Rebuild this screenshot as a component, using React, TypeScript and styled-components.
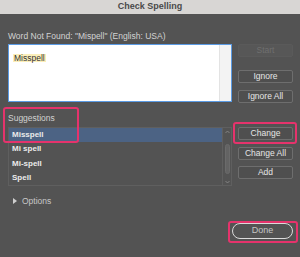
import React from "react";
import styled, { createGlobalStyle, css } from "styled-components";

const GlobalStyle = createGlobalStyle`
  html, body {
    margin: 0;
    padding: 0;
    background: #535353;
  }
  body {
    font-family: "Liberation Sans", Arial, sans-serif;
  }
`;

const PINK = "#e5336c";

// pink annotation frame drawn over a control
const marked = css`
  position: relative;
  &::after {
    content: "";
    position: absolute;
    border: 2px solid ${PINK};
    border-radius: 3px;
    pointer-events: none;
  }
`;

const Window = styled.div`
  width: 300px;
  height: 257px;
  background: #535353;
  display: flex;
  flex-direction: column;
  overflow: hidden;
`;

const TitleBar = styled.div`
  height: 14px;
  background: #d8d6d4;
  display: flex;
  justify-content: center;
  align-items: flex-start;
  padding-top: 1px;
  box-sizing: border-box;
  font-size: 9px;
  line-height: 11px;
  font-weight: bold;
  color: #4a4a4a;
`;

const Body = styled.div`
  display: flex;
  flex-direction: column;
  padding: 16px 0 0 8px;
`;

const FieldLabel = styled.div`
  font-size: 8.5px;
  line-height: 12px;
  color: #d2d2d2;
  white-space: nowrap;
`;

const Row = styled.div<{ $top: number }>`
  display: flex;
  gap: 6px;
  align-items: flex-start;
  margin-top: ${(p) => p.$top}px;
`;

const TextBox = styled.div`
  width: 224px;
  height: 58px;
  box-sizing: border-box;
  border: 1px solid #5b9be4;
  background: #ffffff;
  display: flex;
`;

const TextArea = styled.div`
  flex: 1;
  padding: 2px 4px;
`;

const BadWord = styled.span`
  display: inline-block;
  background: #fbeeb9;
  color: #333333;
  font-size: 8.5px;
  line-height: 8px;
  padding: 0 1px;
`;

const LightScroll = styled.div`
  width: 11px;
  background: #f3f3f3;
  border-left: 1px solid #e3e3e3;
`;

const ButtonStack = styled.div`
  width: 55px;
  display: flex;
  flex-direction: column;
`;

const Button = styled.div<{ $top?: number; $disabled?: boolean; $marked?: boolean }>`
  height: 13px;
  margin-top: ${(p) => p.$top ?? 0}px;
  box-sizing: border-box;
  border: 1px solid ${(p) => (p.$disabled ? "#5a5a5a" : "#6e6e6e")};
  border-radius: 2px;
  background: ${(p) => (p.$disabled ? "#575757" : "#4f4f4f")};
  color: ${(p) => (p.$disabled ? "#6f6f6f" : "#e6e6e6")};
  font-size: 8.5px;
  line-height: 11px;
  text-align: center;
  ${(p) =>
    p.$marked &&
    css`
      ${marked};
      &::after {
        inset: -6px -5px -5px -6px;
      }
    `}
`;

const SuggestionsBlock = styled.div`
  position: relative;
  margin-top: 9px;
`;

const Annotation = styled.div`
  position: absolute;
  left: -5px;
  top: -5px;
  width: 76px;
  height: 36px;
  box-sizing: border-box;
  border: 2px solid ${PINK};
  border-radius: 3px;
  pointer-events: none;
`;

const List = styled.div`
  width: 224px;
  height: 59px;
  box-sizing: border-box;
  border: 1px solid #5f5f5f;
  display: flex;
`;

const Rows = styled.div`
  flex: 1;
`;

const ListRow = styled.div<{ $selected?: boolean }>`
  height: 14.25px;
  line-height: 14.25px;
  padding-left: 3px;
  font-size: 8px;
  font-weight: bold;
  color: #ebebeb;
  background: ${(p) => (p.$selected ? "#4c6384" : "transparent")};
`;

const ScrollTrack = styled.div`
  width: 8px;
  border-left: 1px solid #5f5f5f;
  display: flex;
  flex-direction: column;
  align-items: center;
  padding: 2px 0 1px;
`;

const Thumb = styled.div`
  width: 5px;
  height: 30px;
  margin-top: 10px;
  box-sizing: border-box;
  border-radius: 3px;
  background: #636363;
  border: 1px solid #6b6b6b;
`;

const Spacer = styled.div`
  flex: 1;
`;

const OptionsRow = styled.div`
  display: flex;
  align-items: center;
  gap: 5px;
  margin-top: 9px;
  padding-left: 5px;
  height: 12px;
  font-size: 8.5px;
  color: #c8c8c8;
`;

const Footer = styled.div`
  display: flex;
  justify-content: flex-end;
  padding-right: 7px;
  margin-top: 16px;
`;

const PillButton = styled.div`
  ${marked};
  width: 61px;
  height: 16px;
  box-sizing: border-box;
  border: 1.5px solid #dadada;
  border-radius: 8px;
  background: #535353;
  color: #c4c4c4;
  font-size: 9px;
  line-height: 13px;
  text-align: center;
  &::after {
    inset: -3.5px -5.5px -4.5px -5.5px;
  }
`;

const Chevron = ({ up }: { up?: boolean }) => (
  <svg width="5" height="4" viewBox="0 0 5 4">
    <polyline
      points={up ? "0.5,3 2.5,1 4.5,3" : "0.5,1 2.5,3 4.5,1"}
      fill="none"
      stroke="#8f8f8f"
      strokeWidth="0.8"
    />
  </svg>
);

const suggestions = ["Misspell", "Mi spell", "Mi-spell", "Spell"];

const App = () => {
  return (
    <Window>
      <GlobalStyle />
      <TitleBar>Check Spelling</TitleBar>
      <Body>
        <FieldLabel>Word Not Found: "Mispell" (English: USA)</FieldLabel>
        <Row $top={2}>
          <TextBox>
            <TextArea>
              <BadWord>Misspell</BadWord>
            </TextArea>
            <LightScroll />
          </TextBox>
          <ButtonStack>
            <Button $disabled>Start</Button>
            <Button $top={13}>Ignore</Button>
            <Button $top={7}>Ignore All</Button>
          </ButtonStack>
        </Row>

        <SuggestionsBlock>
          <FieldLabel>Suggestions</FieldLabel>
          <Row $top={3}>
            <List>
              <Rows>
                {suggestions.map((s, i) => (
                  <ListRow key={s} $selected={i === 0}>
                    {s}
                  </ListRow>
                ))}
              </Rows>
              <ScrollTrack>
                <Chevron up />
                <Thumb />
                <Spacer />
                <Chevron />
              </ScrollTrack>
            </List>
            <ButtonStack>
              <Button $marked>Change</Button>
              <Button $top={7}>Change All</Button>
              <Button $top={6}>Add</Button>
            </ButtonStack>
          </Row>
          <Annotation />
        </SuggestionsBlock>

        <OptionsRow>
          <svg width="4" height="6" viewBox="0 0 4 6">
            <polygon points="0,0 4,3 0,6" fill="#cfcfcf" />
          </svg>
          Options
        </OptionsRow>

        <Footer>
          <PillButton>Done</PillButton>
        </Footer>
      </Body>
    </Window>
  );
};

export default App;
